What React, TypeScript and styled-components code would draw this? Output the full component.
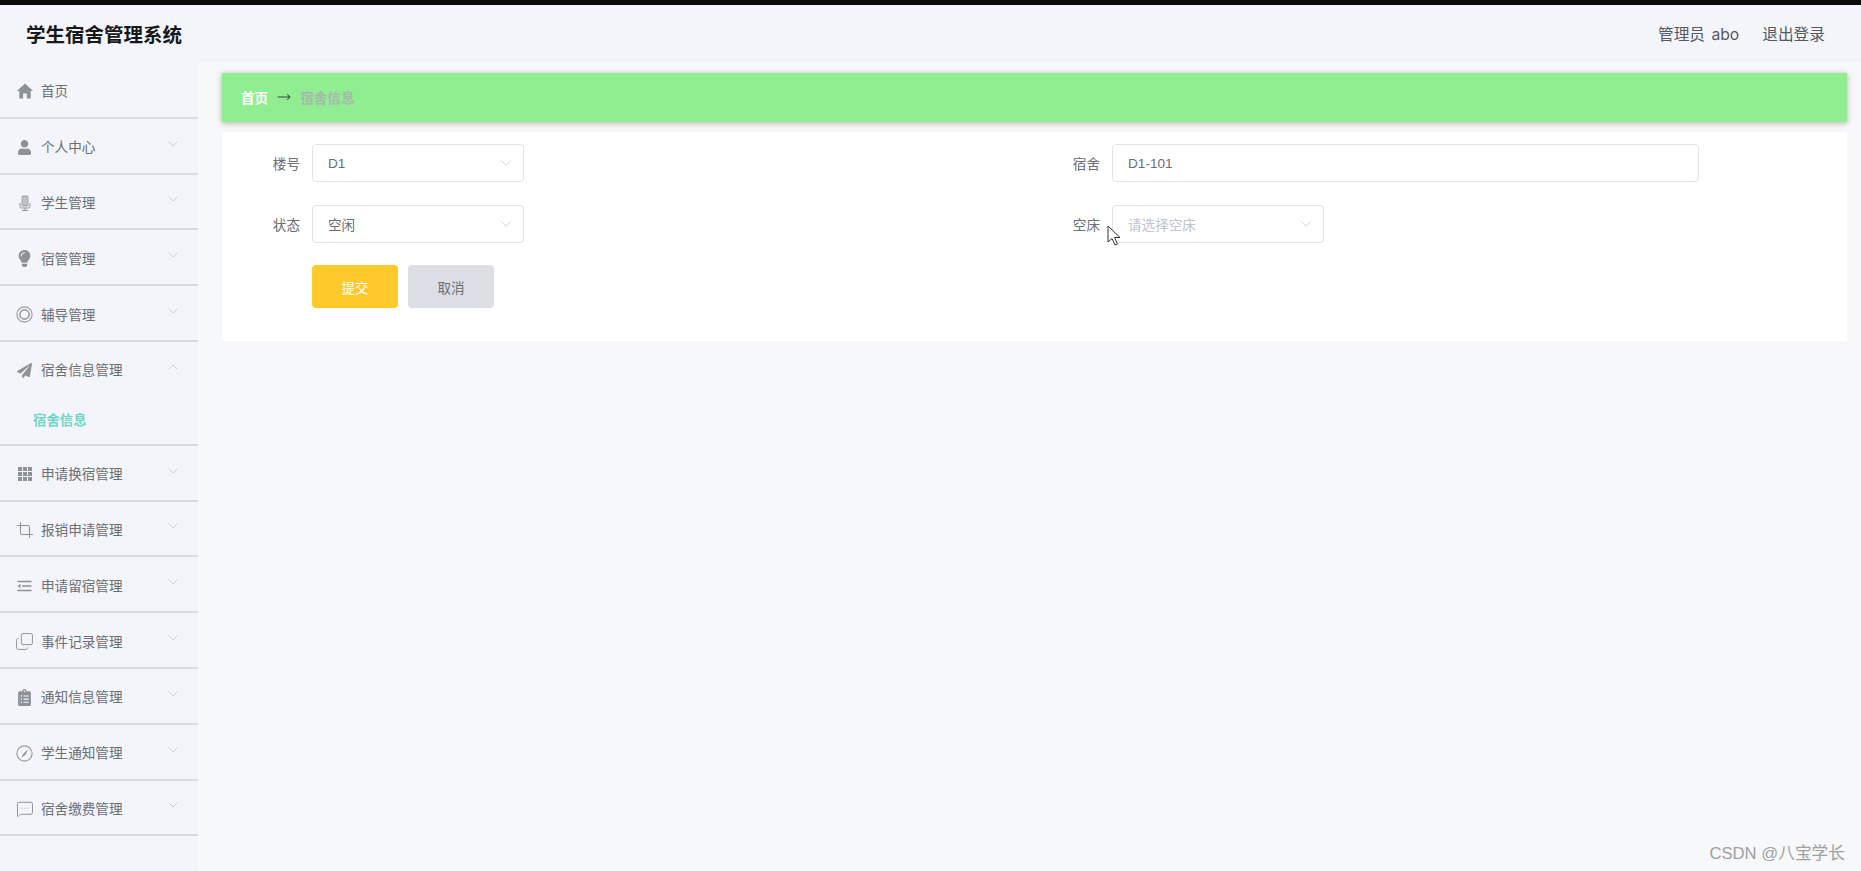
import React from 'react'
import styled, { createGlobalStyle } from 'styled-components'
import { ChevronDown, ChevronUp, Copy, Crop, MessageSquareMore } from 'lucide-react'
import { FaClipboardList, FaLightbulb, FaPaperPlane, FaUser } from 'react-icons/fa'
import { IoMdHome } from 'react-icons/io'
import { HiArrowLongRight } from 'react-icons/hi2'

const GlobalStyle = createGlobalStyle`
  html, body {
    margin: 0;
    padding: 0;
    background: #f7f8fa;
    font-family: "Liberation Sans", "Noto Sans CJK SC", sans-serif;
  }
  * { box-sizing: border-box; }
`

const Page = styled.div`
  position: relative;
  width: 1861px;
  height: 871px;
  overflow: hidden;
  display: flex;
  flex-direction: column;
  background: #f7f8fa;
`

const TopEdge = styled.div`
  height: 5px;
  background: #0b0b0b;
  flex: none;
`

const Header = styled.header`
  height: 57px;
  flex: none;
  display: flex;
  align-items: center;
  justify-content: space-between;
  padding: 0 36px 0 26px;
  background: #f4f5fa;
`

const Title = styled.div`
  font-size: 19.5px;
  font-weight: 700;
  color: #17181a;
`

const UserBox = styled.div`
  display: flex;
  gap: 23px;
  font-family: "Inter", "Noto Sans CJK SC", sans-serif;
  font-size: 15.7px;
  word-spacing: 2px;
  color: #54585f;
`

const Body = styled.div`
  flex: 1;
  display: flex;
  min-height: 0;
`

const Sidebar = styled.nav`
  width: 198px;
  flex: none;
  padding-top: 1px;
  background: #f4f5fa;
`

const MenuGroup = styled.div`
  border-bottom: 2px solid #d9dbe0;
`

const MenuRow = styled.div`
  height: 53.8px;
  display: flex;
  align-items: center;
  padding: 1px 17px 0 17px;
  font-size: 13.6px;
  color: #6a6e75;
`

const IconSlot = styled.span`
  width: 15px;
  height: 16px;
  margin-right: 9px;
  display: flex;
  align-items: center;
  justify-content: center;
  color: #8d9198;
  flex: none;
  position: relative;
  top: 1px;

  & > svg {
    flex: none;
  }
`

const MenuLabel = styled.span`
  flex: 1;
`

const Chevron = styled.span`
  display: flex;
  color: #b4b7bd;
  margin-top: -5px;
`

const SubItem = styled.div`
  height: 48px;
  display: flex;
  align-items: flex-start;
  padding: 13px 0 0 33px;
  font-size: 13.4px;
  font-weight: 700;
  color: #6fd5c6;
`

const Main = styled.main`
  flex: 1;
  min-width: 0;
  padding: 11px 14px 0 24px;
`

const Breadcrumb = styled.div`
  height: 49px;
  display: flex;
  align-items: center;
  padding: 0 0 2px 19px;
  background: #90ee90;
  box-shadow: 0 1px 6px rgba(0, 0, 0, 0.3);
  font-size: 13.6px;
`

const CrumbHome = styled.span`
  color: #fff;
  font-weight: 700;
`

const CrumbArrow = styled.span`
  display: flex;
  margin: 0 8px;
  color: #3c4a3f;
`

const CrumbCurrent = styled.span`
  color: #a6b8ae;
  font-weight: 700;
`

const FormCard = styled.div`
  margin-top: 10px;
  height: 209px;
  background: #fff;
  padding: 12px 0 0;
`

const FormGrid = styled.div`
  display: grid;
  grid-template-columns: 800px 1fr;
  row-gap: 23px;
`

const Field = styled.div`
  display: flex;
  align-items: center;
  height: 38px;
`

const FieldLabel = styled.label`
  width: 78px;
  margin-right: 12px;
  text-align: right;
  font-size: 13.6px;
  color: #6a6e75;
`

const Control = styled.div<{ $width: number; $muted?: boolean }>`
  width: ${(p) => p.$width}px;
  height: 38px;
  display: flex;
  align-items: center;
  justify-content: space-between;
  padding: 0 15px;
  background: #fff;
  border: 1px solid #dfe2ea;
  border-radius: 4px;
  font-size: 13.6px;
  color: ${(p) => (p.$muted ? '#c0c4cc' : '#6a6e75')};
`

const SelectArrow = styled.span`
  display: flex;
  color: #c0c4cc;
  margin-right: -7px;
`

const ButtonRow = styled.div`
  display: flex;
  gap: 10px;
  margin: 22px 0 0 90px;
`

const Button = styled.button<{ $primary?: boolean }>`
  width: 86px;
  height: 43px;
  border: 0;
  border-radius: 4px;
  font: inherit;
  font-size: 13.6px;
  background: ${(p) => (p.$primary ? '#ffc92c' : '#dcdfe6')};
  color: ${(p) => (p.$primary ? '#fff' : '#6a6e75')};
`

const Watermark = styled.div`
  position: absolute;
  right: 16px;
  bottom: 7px;
  font-size: 16.7px;
  color: #a0a0a0;
`

const Cursor = styled.svg`
  position: absolute;
  left: 1107px;
  top: 225px;
`

type MenuItem = {
  label: string
  icon: React.ReactNode
  open?: boolean
  noArrow?: boolean
  sub?: string
}

const MicIcon = () => (
  <svg width="12" height="16" viewBox="0 0 12 16">
    <rect x="2.5" y="0.5" width="7" height="11" rx="1.5" fill="#a5a8ae" />
    <path d="M3.5 3h5M3.5 5h5M3.5 7h5M3.5 9h5" stroke="#e6e7ea" strokeWidth="0.8" />
    <path d="M1 8v3.5q0 1.5 1.5 1.5h7q1.5 0 1.5-1.5V8M6 13v2.5M3 15.5h6" fill="none" stroke="#8d9198" strokeWidth="1" />
  </svg>
)

const IndentIcon = () => (
  <svg width="15" height="12" viewBox="0 0 15 12">
    <path d="M0.5 1.5h14M5 6h9.5M0.5 10.5h14" stroke="#8d9198" strokeWidth="1.6" fill="none" />
    <path d="M3.5 3.8v4.4L0.5 6z" fill="#8d9198" />
  </svg>
)

const RingIcon = () => (
  <svg width="17" height="17" viewBox="0 0 17 17" fill="none" stroke="#9a9da3">
    <circle cx="8.5" cy="8.5" r="7.6" strokeWidth="1.2" />
    <circle cx="8.5" cy="8.5" r="4.6" strokeWidth="1.6" />
  </svg>
)

const GridIcon = () => (
  <svg width="14" height="14" viewBox="0 0 14 14" fill="#8d9198">
    {[0, 5, 10].map((y) =>
      [0, 5, 10].map((x) => <rect key={`${x}-${y}`} x={x} y={y} width="4" height="4" />)
    )}
  </svg>
)

const CompassIcon = () => (
  <svg width="17" height="17" viewBox="0 0 17 17">
    <circle cx="8.5" cy="8.5" r="7.6" fill="none" stroke="#9a9da3" strokeWidth="1.2" />
    <path d="M11.8 4.6L9.6 9.7 7.3 8.8z" fill="#8d9198" />
    <path d="M5.4 12.6l1.9-3.8 2.3.9z" fill="#8d9198" />
  </svg>
)

const menu: MenuItem[] = [
  { label: '首页', icon: <IoMdHome size={20} />, noArrow: true },
  { label: '个人中心', icon: <FaUser size={15} /> },
  { label: '学生管理', icon: <MicIcon /> },
  { label: '宿管管理', icon: <FaLightbulb size={17} /> },
  { label: '辅导管理', icon: <RingIcon /> },
  { label: '宿舍信息管理', icon: <FaPaperPlane size={15} />, open: true, sub: '宿舍信息' },
  { label: '申请换宿管理', icon: <GridIcon /> },
  { label: '报销申请管理', icon: <Crop size={18} strokeWidth={1.4} /> },
  { label: '申请留宿管理', icon: <IndentIcon /> },
  { label: '事件记录管理', icon: <Copy size={19} strokeWidth={1.2} style={{ transform: 'scaleY(-1)' }} /> },
  { label: '通知信息管理', icon: <FaClipboardList size={17} /> },
  { label: '学生通知管理', icon: <CompassIcon /> },
  { label: '宿舍缴费管理', icon: <MessageSquareMore size={18} strokeWidth={1.3} /> },
]

export default function App() {
  return (
    <Page>
      <GlobalStyle />
      <TopEdge />
      <Header>
        <Title>学生宿舍管理系统</Title>
        <UserBox>
          <span>管理员 abo</span>
          <span>退出登录</span>
        </UserBox>
      </Header>
      <Body>
        <Sidebar>
          {menu.map((item) => (
            <MenuGroup key={item.label}>
              <MenuRow>
                <IconSlot>{item.icon}</IconSlot>
                <MenuLabel>{item.label}</MenuLabel>
                {!item.noArrow && (
                  <Chevron>
                    {item.open ? <ChevronUp size={16} strokeWidth={1} /> : <ChevronDown size={16} strokeWidth={1} />}
                  </Chevron>
                )}
              </MenuRow>
              {item.sub && <SubItem>{item.sub}</SubItem>}
            </MenuGroup>
          ))}
        </Sidebar>
        <Main>
          <Breadcrumb>
            <CrumbHome>首页</CrumbHome>
            <CrumbArrow>
              <HiArrowLongRight size={16} />
            </CrumbArrow>
            <CrumbCurrent>宿舍信息</CrumbCurrent>
          </Breadcrumb>
          <FormCard>
            <FormGrid>
              <Field>
                <FieldLabel>楼号</FieldLabel>
                <Control $width={212}>
                  D1
                  <SelectArrow>
                    <ChevronDown size={18} strokeWidth={1} />
                  </SelectArrow>
                </Control>
              </Field>
              <Field>
                <FieldLabel>宿舍</FieldLabel>
                <Control $width={587}>D1-101</Control>
              </Field>
              <Field>
                <FieldLabel>状态</FieldLabel>
                <Control $width={212}>
                  空闲
                  <SelectArrow>
                    <ChevronDown size={18} strokeWidth={1} />
                  </SelectArrow>
                </Control>
              </Field>
              <Field>
                <FieldLabel>空床</FieldLabel>
                <Control $width={212} $muted>
                  请选择空床
                  <SelectArrow>
                    <ChevronDown size={18} strokeWidth={1} />
                  </SelectArrow>
                </Control>
              </Field>
            </FormGrid>
            <ButtonRow>
              <Button $primary>提交</Button>
              <Button>取消</Button>
            </ButtonRow>
          </FormCard>
        </Main>
      </Body>
      <Cursor width="14" height="22" viewBox="0 0 14 22">
        <path d="M1 1v16l4-3.5 3 6.5 2.5-1-3-6.5h5.5z" fill="#fff" stroke="#333" strokeWidth="1" />
      </Cursor>
      <Watermark>CSDN @八宝学长</Watermark>
    </Page>
  )
}
